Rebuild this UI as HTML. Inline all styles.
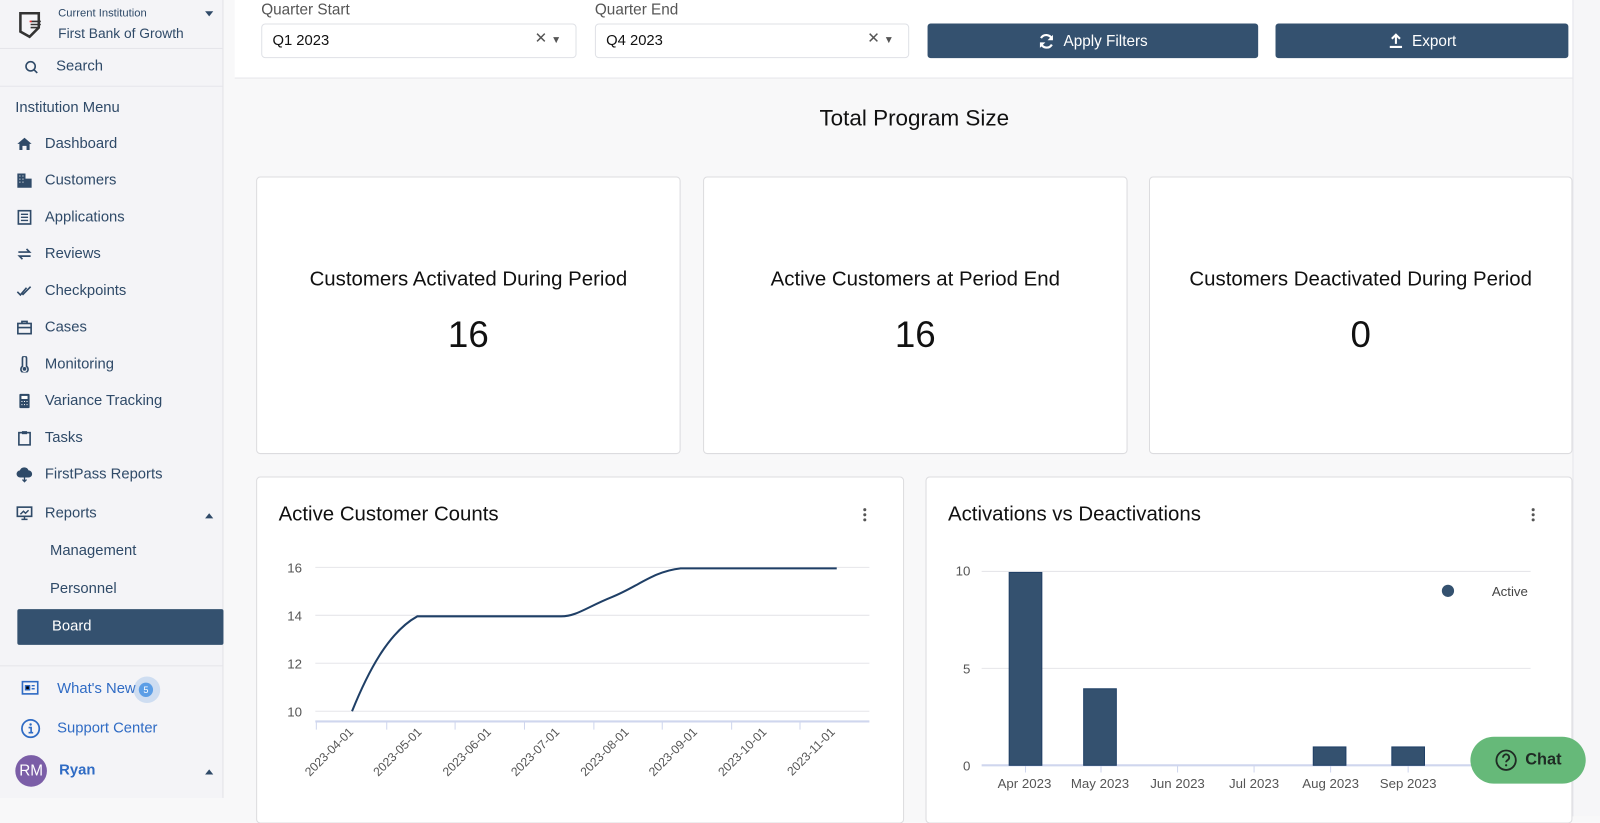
<!DOCTYPE html>
<html><head><meta charset="utf-8"><style>
*{box-sizing:border-box;margin:0;padding:0}
html,body{width:1600px;height:798px;overflow:hidden;background:#f8f8f9}
#w{position:absolute;left:0;top:0;width:1568px;height:782px;transform:scale(1.020408);transform-origin:0 0;font-family:"Liberation Sans",Arial,sans-serif;color:#111}
.abs{position:absolute}
#sb{left:0;top:0;width:219px;height:782px;background:#f4f4f7;border-right:1px solid #e3e3e8;color:#2f4a68}
.item{position:absolute;left:16px;font-size:14.5px;display:flex;align-items:center}
.item svg{width:16px;height:16px;margin-right:12px}
.sub{position:absolute;left:49px;font-size:14.5px}
.card{position:absolute;background:#fff;border:1px solid #dcdcdf;border-radius:4px}
.sel{position:absolute;top:23px;height:34px;background:#fff;border:1px solid #dfe1e6;border-radius:4px;font-size:14.5px;padding:8px 10px}
.btn{position:absolute;top:23px;height:34px;background:#34516f;border-radius:3px;color:#fff;font-size:15px;display:flex;align-items:center;justify-content:center}
.lbl{position:absolute;top:1px;font-size:15px;color:#555}
.ct{font-size:20px;text-align:center;position:absolute;width:100%}
.num{font-size:36px;text-align:center;position:absolute;width:100%}
</style></head><body><div id="w">
<div id="sb" class="abs">
  <svg class="abs" style="left:18px;top:11px" width="26" height="28" viewBox="0 0 26 28"><path d="M2 2h18v14l-9 9-9-5z" fill="none" stroke="#333" stroke-width="2.5"/><path d="M12 10h10M12 13h10M12 16h8" stroke="#333" stroke-width="1.5"/><path d="M11 10h2" stroke="#e33" stroke-width="1.5"/></svg>
  <div class="abs" style="left:57px;top:7px;font-size:11px">Current Institution</div>
  <div class="abs" style="left:57px;top:25px;font-size:13.5px">First Bank of Growth</div>
  <div class="abs" style="left:201px;top:11px;border:4px solid transparent;border-top:5px solid #2f4a68"></div>
  <div class="abs" style="left:0;top:47px;width:218px;border-top:1px solid #e5e5ea"></div>
  <svg class="abs" style="left:24px;top:59px" width="14" height="14" viewBox="0 0 14 14"><circle cx="6" cy="6" r="4.5" fill="none" stroke="#2f4a68" stroke-width="1.6"/><path d="M9.5 9.5l3 3" stroke="#2f4a68" stroke-width="1.6"/></svg>
  <div class="abs" style="left:55px;top:57px;font-size:14.5px">Search</div>
  <div class="abs" style="left:0;top:84px;width:218px;border-top:1px solid #e5e5ea"></div>
  <div class="abs" style="left:15px;top:98px;font-size:14.5px">Institution Menu</div>
  <div class="item" style="top:133px"><svg viewBox="0 0 16 16"><path d="M1 8L8 2l7 6h-2v6H10v-4H6v4H3V8z" fill="#2f4a68"/></svg>Dashboard</div>
  <div class="item" style="top:169px"><svg viewBox="0 0 16 16"><path d="M1 1h8v14H1zM9 6h6v9H9z" fill="#2f4a68"/><path d="M3 3h1v1H3zM6 3h1v1H6zM3 6h1v1H3zM6 6h1v1H6zM3 9h1v1H3zM6 9h1v1H6z" fill="#fff"/></svg>Customers</div>
  <div class="item" style="top:205px"><svg viewBox="0 0 16 16"><rect x="2" y="1.5" width="12" height="13" fill="none" stroke="#2f4a68" stroke-width="1.6"/><path d="M4.5 5h7M4.5 8h7M4.5 11h7" stroke="#2f4a68" stroke-width="1.3"/></svg>Applications</div>
  <div class="item" style="top:241px"><svg viewBox="0 0 16 16"><path d="M2 6h11l-3-3M14 10H3l3 3" fill="none" stroke="#2f4a68" stroke-width="1.6"/></svg>Reviews</div>
  <div class="item" style="top:277px"><svg viewBox="0 0 16 16"><path d="M1 9l3 3 6-7M6 12l8-8" fill="none" stroke="#2f4a68" stroke-width="1.6"/></svg>Checkpoints</div>
  <div class="item" style="top:313px"><svg viewBox="0 0 16 16"><rect x="1.5" y="4" width="13" height="10" fill="none" stroke="#2f4a68" stroke-width="1.6"/><path d="M5.5 4V2h5v2M1.5 8h13" fill="none" stroke="#2f4a68" stroke-width="1.6"/></svg>Cases</div>
  <div class="item" style="top:349px"><svg viewBox="0 0 16 16"><path d="M6 2a2 2 0 014 0v8a3.5 3.5 0 11-4 0z" fill="none" stroke="#2f4a68" stroke-width="1.6"/><circle cx="8" cy="12.5" r="1.8" fill="#2f4a68"/></svg>Monitoring</div>
  <div class="item" style="top:385px"><svg viewBox="0 0 16 16"><rect x="3" y="1" width="10" height="14" rx="1" fill="#2f4a68"/><rect x="5" y="3" width="6" height="3" fill="#fff"/><path d="M5 8h1v1H5zM7.5 8h1v1h-1zM10 8h1v1h-1zM5 11h1v1H5zM7.5 11h1v1h-1zM10 11h1v1h-1z" fill="#fff"/></svg>Variance Tracking</div>
  <div class="item" style="top:421px"><svg viewBox="0 0 16 16"><rect x="2.5" y="3" width="11" height="12" fill="none" stroke="#2f4a68" stroke-width="1.6"/><rect x="5.5" y="1.5" width="5" height="3" fill="#2f4a68"/></svg>Tasks</div>
  <div class="item" style="top:457px"><svg viewBox="0 0 16 16"><path d="M4 11a3.5 3.5 0 01-.5-7A4.5 4.5 0 0112 4a3.5 3.5 0 010 7z" fill="#2f4a68"/><path d="M8 8v7M6 13l2 2 2-2" fill="none" stroke="#2f4a68" stroke-width="1.3"/></svg>FirstPass Reports</div>
  <div class="item" style="top:495px"><svg viewBox="0 0 16 16"><rect x="1" y="2" width="14" height="9" fill="none" stroke="#2f4a68" stroke-width="1.6"/><path d="M4 9l3-3 2 2 3-3M8 11v3M5 14h6" fill="none" stroke="#2f4a68" stroke-width="1.4"/></svg>Reports</div>
  <div class="abs" style="left:201px;top:499px;border:4px solid transparent;border-bottom:5px solid #2f4a68"></div>
  <div class="sub" style="top:532px">Management</div>
  <div class="sub" style="top:569px">Personnel</div>
  <div class="abs" style="left:17px;top:597px;width:202px;height:35px;background:#34516f;border-radius:2px;color:#fff;font-size:14.5px;padding:9px 0 0 34px">Board</div>
  <div class="abs" style="left:0;top:652px;width:218px;border-top:1px solid #e5e5ea"></div>
  <svg class="abs" style="left:21px;top:667px" width="17" height="15" viewBox="0 0 17 15"><rect x="1" y="1" width="15" height="12" fill="none" stroke="#2f6bc4" stroke-width="1.6"/><path d="M4 5h4v4H4zM10 5h3M10 8h3" stroke="#2f6bc4" stroke-width="1.4"/></svg>
  <div class="abs" style="left:56px;top:667px;font-size:14.5px;color:#2f6bc4">What's New</div>
  <div class="abs" style="left:131px;top:663px;width:26px;height:26px;border-radius:50%;background:rgba(120,170,230,.3)"></div>
  <div class="abs" style="left:136px;top:669px;width:14px;height:14px;border-radius:50%;background:#5c9ee6;color:#fff;font-size:9px;text-align:center;line-height:14px">5</div>
  <svg class="abs" style="left:20px;top:704px" width="20" height="20" viewBox="0 0 20 20"><circle cx="10" cy="10" r="8.5" fill="none" stroke="#2f6bc4" stroke-width="1.7"/><circle cx="10" cy="6" r="1.2" fill="#2f6bc4"/><path d="M8 9h2.5v5M8 14h4.5" stroke="#2f6bc4" stroke-width="1.6" fill="none"/></svg>
  <div class="abs" style="left:56px;top:706px;font-size:14.5px;color:#2f6bc4">Support Center</div>
  <div class="abs" style="left:15px;top:740px;width:31px;height:31px;border-radius:50%;background:#7b5ea7;color:#fff;font-size:15px;text-align:center;line-height:31px">RM</div>
  <div class="abs" style="left:58px;top:747px;font-size:14.5px;color:#2f6bc4;font-weight:bold">Ryan</div>
  <div class="abs" style="left:201px;top:750px;border:4px solid transparent;border-bottom:5px solid #2f4a68"></div>
</div>

<div class="abs" style="left:230px;top:0;width:1311px;height:77px;background:#fff;border-bottom:1px solid #e5e5ea"></div>
<div class="abs" style="left:1541px;top:0;width:40px;height:800px;background:#f6f6f8;border-left:1px solid #e5e5ea"></div>
<div class="lbl" style="left:256px">Quarter Start</div>
<div class="lbl" style="left:583px">Quarter End</div>
<div class="sel" style="left:256px;width:309px">Q1 2023<span style="position:absolute;right:14px;top:6px;color:#555">✕ <span style="font-size:10px">▼</span></span></div>
<div class="sel" style="left:583px;width:308px">Q4 2023<span style="position:absolute;right:14px;top:6px;color:#555">✕ <span style="font-size:10px">▼</span></span></div>
<div class="btn" style="left:909px;width:324px"><svg width="17" height="17" viewBox="0 0 16 16" style="margin-right:8px"><path d="M13 6A5.5 5.5 0 003 5M3 10a5.5 5.5 0 0010 1" fill="none" stroke="#fff" stroke-width="2"/><path d="M14 2v5H9zM2 14V9h5z" fill="#fff"/></svg>Apply Filters</div>
<div class="btn" style="left:1250px;width:287px"><svg width="16" height="16" viewBox="0 0 16 16" style="margin-right:8px"><path d="M8 11V3M4 6l4-4 4 4M2 14h12" fill="none" stroke="#fff" stroke-width="2"/></svg>Export</div>

<div class="abs" style="left:230px;top:103px;width:1332px;text-align:center;font-size:22px">Total Program Size</div>

<div class="card" style="left:251px;top:173px;width:416px;height:272px"><div class="ct" style="top:89px">Customers Activated During Period</div><div class="num" style="top:133px">16</div></div>
<div class="card" style="left:689px;top:173px;width:416px;height:272px"><div class="ct" style="top:89px">Active Customers at Period End</div><div class="num" style="top:133px">16</div></div>
<div class="card" style="left:1126px;top:173px;width:415px;height:272px"><div class="ct" style="top:89px">Customers Deactivated During Period</div><div class="num" style="top:133px">0</div></div>

<div class="card" style="left:251px;top:467px;width:635px;height:340px"></div>
<div class="card" style="left:907px;top:467px;width:634px;height:340px"></div>
<div class="abs" style="left:273px;top:493px;font-size:20px">Active Customer Counts</div>
<div class="abs" style="left:929px;top:493px;font-size:20px">Activations vs Deactivations</div>
<div class="abs" style="left:846px;top:498px;width:4px;font-size:0"><i style="display:block;width:3px;height:3px;background:#555;border-radius:50%;margin-bottom:2px"></i><i style="display:block;width:3px;height:3px;background:#555;border-radius:50%;margin-bottom:2px"></i><i style="display:block;width:3px;height:3px;background:#555;border-radius:50%"></i></div>
<div class="abs" style="left:1501px;top:498px;width:4px;font-size:0"><i style="display:block;width:3px;height:3px;background:#555;border-radius:50%;margin-bottom:2px"></i><i style="display:block;width:3px;height:3px;background:#555;border-radius:50%;margin-bottom:2px"></i><i style="display:block;width:3px;height:3px;background:#555;border-radius:50%"></i></div>

<svg class="abs" style="left:0;top:0" width="1600" height="798" font-family="Liberation Sans, Arial, sans-serif">
 <g stroke="#e6e6ea" stroke-width="1">
  <path d="M309 556H852M309 603H852M309 650H852M309 697H852"/>
 </g>
 <path d="M309 707H852" stroke="#cfd6ee" stroke-width="2"/>
 <g stroke="#cfd6ee"><path d="M310 707v8M379 707v8M446 707v8M514 707v8M582 707v8M649 707v8M717 707v8M784 707v8"/></g>
 <g font-size="13" fill="#555" text-anchor="end">
  <text x="296" y="561">16</text><text x="296" y="608">14</text><text x="296" y="655">12</text><text x="296" y="702">10</text>
 </g>
 <g font-size="12" fill="#555" text-anchor="end">
  <text transform="translate(347,718) rotate(-45)">2023-04-01</text>
  <text transform="translate(414,718) rotate(-45)">2023-05-01</text>
  <text transform="translate(482,718) rotate(-45)">2023-06-01</text>
  <text transform="translate(549,718) rotate(-45)">2023-07-01</text>
  <text transform="translate(617,718) rotate(-45)">2023-08-01</text>
  <text transform="translate(684,718) rotate(-45)">2023-09-01</text>
  <text transform="translate(752,718) rotate(-45)">2023-10-01</text>
  <text transform="translate(819,718) rotate(-45)">2023-11-01</text>
 </g>
 <path d="M345 697C360 660 380 620 409 604L550 604C565 604 575 595 600 585C625 575 640 560 667 557L820 557" fill="none" stroke="#1f3f66" stroke-width="2"/>

 <g stroke="#e6e6ea"><path d="M962 560H1500M962 655H1500"/></g>
 <path d="M962 750H1500" stroke="#cfd6ee" stroke-width="2"/>
 <g stroke="#cfd6ee"><path d="M1005 750v7M1079 750v7M1154 750v7M1229 750v7M1304 750v7M1380 750v7"/></g>
 <g font-size="13" fill="#555" text-anchor="end"><text x="951" y="564">10</text><text x="951" y="660">5</text><text x="951" y="755">0</text></g>
 <g fill="#34516f" stroke="#1f3f66" stroke-width="1">
  <rect x="989" y="561" width="32" height="189"/><rect x="1062" y="675" width="32" height="75"/><rect x="1287" y="732" width="32" height="18"/><rect x="1364" y="732" width="32" height="18"/>
 </g>
 <g font-size="13" fill="#555" text-anchor="middle">
  <text x="1004" y="772">Apr 2023</text><text x="1078" y="772">May 2023</text><text x="1154" y="772">Jun 2023</text><text x="1229" y="772">Jul 2023</text><text x="1304" y="772">Aug 2023</text><text x="1380" y="772">Sep 2023</text>
 </g>
 <circle cx="1419" cy="579" r="6" fill="#34516f"/>
 <text x="1462" y="584" font-size="13" fill="#444">Active</text>
</svg>

<div class="abs" style="left:1441px;top:722px;width:113px;height:46px;border-radius:23px;background:#66b979;display:flex;align-items:center;justify-content:center;font-size:16px;font-weight:bold;color:#1f2b24">
 <svg width="22" height="22" viewBox="0 0 22 22" style="margin-right:8px"><circle cx="11" cy="11" r="9.5" fill="none" stroke="#1f2b24" stroke-width="1.8"/><path d="M8 8.5a3 3 0 115 2c-1.2.8-2 1.2-2 2.5" fill="none" stroke="#1f2b24" stroke-width="1.8"/><circle cx="11" cy="16" r="1.1" fill="#1f2b24"/></svg>Chat</div>
</div></body></html>
